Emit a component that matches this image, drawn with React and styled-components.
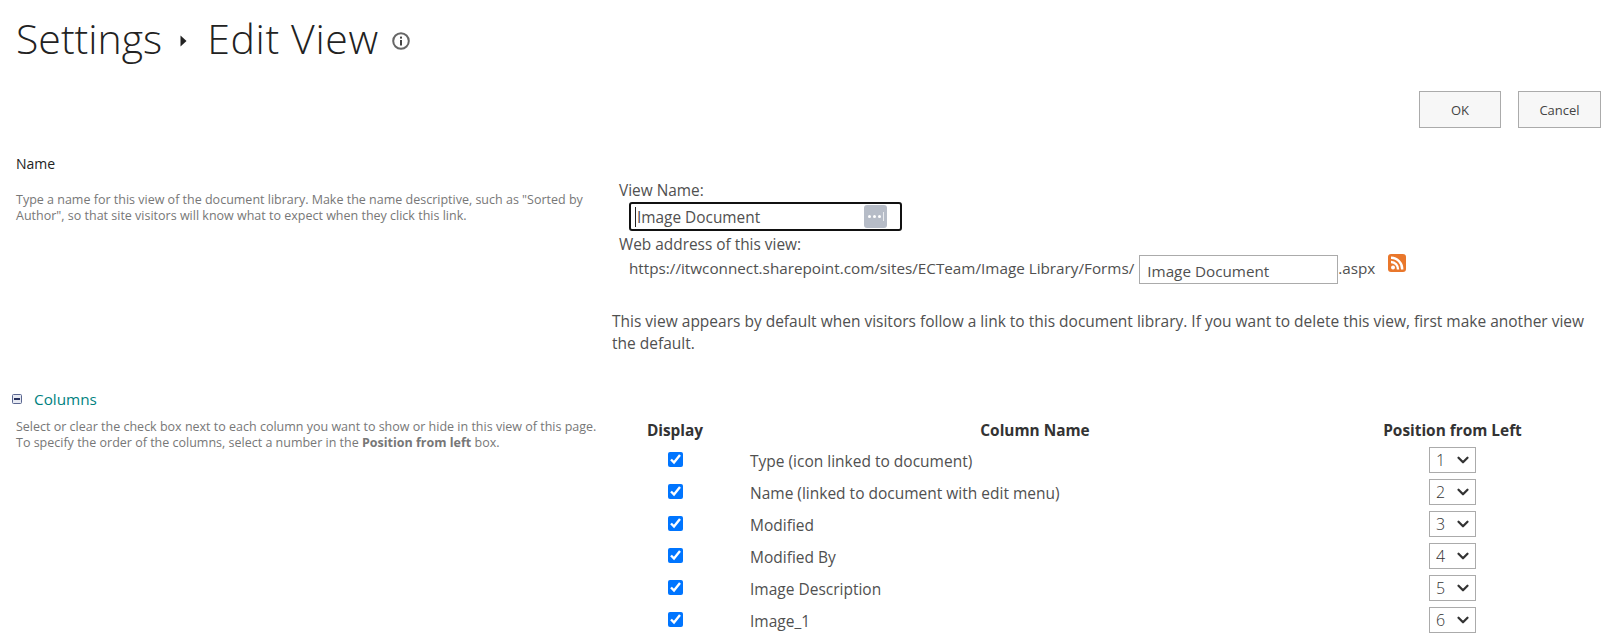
import React from 'react';
import styled, { createGlobalStyle } from 'styled-components';
import { ChevronDown } from 'lucide-react';

const GlobalStyle = createGlobalStyle`
    html, body {
        margin: 0;
        background: #fff;
        overflow: hidden;
    }
    body {
        font-family: "Open Sans", "Noto Sans", "Liberation Sans", sans-serif;
        color: #444;
    }
`;

const Page = styled.div`
    width: 1605px;
    height: 634px;
    overflow: hidden;
    padding: 13px 4px 0 16px;
    box-sizing: border-box;
`;

const TitleRow = styled.div`
    display: flex;
    align-items: center;
    height: 50px;
`;

const TitleText = styled.h1`
    margin: 0;
    font-size: 41px;
    font-weight: 300;
    line-height: 50px;
    letter-spacing: ${p => p.$spacing || 0}px;
    color: #222;
`;

const Crumb = styled.svg`
    width: 7px;
    height: 12px;
    margin: 5px 20px 0 18px;
`;

const InfoIcon = styled.svg`
    width: 18px;
    height: 18px;
    margin: 5px 0 0 13px;
`;

const ButtonRow = styled.div`
    display: flex;
    justify-content: flex-end;
    gap: 17px;
    margin-top: 28px;
`;

const Button = styled.button`
    width: ${p => p.$w}px;
    height: 37px;
    border: 1px solid #ababab;
    background: #f7f7f7;
    color: #444;
    font-family: inherit;
    font-size: 13px;
    padding: 0;
`;

const Section = styled.section`
    display: grid;
    grid-template-columns: 596px 1fr;
`;

const SectionTitle = styled.div`
    font-size: 14px;
    line-height: 18px;
    color: #222;
    margin-top: 27px;
`;

const Help = styled.p`
    margin: ${p => p.$top}px 0 0;
    font-size: 12.5px;
    line-height: 16px;
    color: #777;
    width: 590px;
`;

const NameForm = styled.div`
    padding: 52px 0 0;
    font-size: 15.4px;
    color: #505050;
`;

const Label = styled.div`
    line-height: 21px;
    margin-left: 7px;
`;

const NameInputWrap = styled.div`
    position: relative;
    width: 273px;
    height: 29px;
    margin: 1px 0 3px 17px;
`;

const NameInput = styled.input`
    width: 100%;
    height: 100%;
    box-sizing: border-box;
    border: 2px solid #111;
    border-radius: 3px;
    padding: 1px 0 0 6px;
    font: inherit;
    color: #505050;
    outline: none;
`;

const Caret = styled.span`
    position: absolute;
    left: 6px;
    top: 5px;
    width: 1px;
    height: 20px;
    background: #222;
`;

const DotsButton = styled.span`
    position: absolute;
    left: 235px;
    top: 3px;
    width: 23px;
    height: 23px;
    border-radius: 3px;
    background: #b6bcc7;
    display: flex;
    align-items: center;
    justify-content: center;
    gap: 2px;
`;

const Dot = styled.i`
    width: 3px;
    height: 3px;
    border-radius: 50%;
    background: #fff;
`;

const DotsBar = styled.i`
    width: 1px;
    height: 9px;
    background: #fff;
    opacity: 0.7;
`;

const AddressRow = styled.div`
    display: flex;
    margin: 0 0 0 17px;
    font-size: 15.25px;
    line-height: 21px;
`;

const AddressText = styled.span`
    margin-top: 3px;
    white-space: nowrap;
`;

const AddressInput = styled.input`
    width: 199px;
    height: 29px;
    box-sizing: border-box;
    border: 1px solid #ababab;
    padding: 2px 0 0 7px;
    margin-left: 5px;
    font: inherit;
    color: #505050;
`;

const Rss = styled.svg`
    width: 18px;
    height: 18px;
    margin: -1px 0 0 13px;
`;

const Note = styled.p`
    margin: 26px 0 0 0;
    width: 975px;
    font-size: 15.5px;
    line-height: 22px;
    color: #505050;
`;

const ColumnsHead = styled.div`
    display: flex;
    align-items: center;
    gap: 12px;
    height: 20px;
    margin-top: 35px;
    margin-left: -4px;
    font-size: 15.3px;
    color: #00827f;
`;

const Collapse = styled.svg`
    width: 10px;
    height: 10px;
`;

const ColumnsTable = styled.div`
    display: grid;
    grid-template-columns: 70px 650px 185px;
    grid-template-rows: 26px repeat(6, 32px);
    margin: 64px 0 0 28px;
    align-items: center;
`;

const HeadCell = styled.div`
    text-align: center;
    font-size: 15.4px;
    font-weight: 700;
    color: #333;
    line-height: 26px;
`;

const CheckCell = styled.div`
    display: flex;
    justify-content: center;
    position: relative;
    top: -1px;
`;

const Check = styled.input`
    width: 15px;
    height: 15px;
    margin: 0;
`;

const ColumnLabel = styled.div`
    padding: 2px 0 0 40px;
    font-size: 15.5px;
    color: #505050;
`;

const SelectCell = styled.div`
    display: flex;
    justify-content: center;
`;

const SelectWrap = styled.div`
    position: relative;
    width: 47px;
    height: 26px;

    svg {
        position: absolute;
        right: 4px;
        top: 4px;
        pointer-events: none;
    }
`;

const PosSelect = styled.select`
    appearance: none;
    width: 100%;
    height: 100%;
    border: 1px solid #ababab;
    border-radius: 0;
    background: #fff;
    font-family: inherit;
    font-size: 16px;
    font-weight: 300;
    color: #333;
    padding: 0 0 0 6px;
`;

const columns = [
    'Type (icon linked to document)',
    'Name (linked to document with edit menu)',
    'Modified',
    'Modified By',
    'Image Description',
    'Image_1',
];

function App() {
    return (
        <>
            <GlobalStyle />
            <Page>
                <TitleRow>
                    <TitleText>Settings</TitleText>
                    <Crumb viewBox="0 0 7 12"><path d="M0.5 0.5l6 5.5-6 5.5z" fill="#222" /></Crumb>
                    <TitleText $spacing={0.65}>Edit View</TitleText>
                    <InfoIcon viewBox="0 0 18 18">
                        <circle cx="9" cy="9" r="7.8" fill="none" stroke="#666" strokeWidth="2" />
                        <rect x="8" y="8" width="2" height="5.5" fill="#444" />
                        <rect x="8" y="4.6" width="2" height="2" fill="#444" />
                    </InfoIcon>
                </TitleRow>

                <ButtonRow>
                    <Button $w={82}>OK</Button>
                    <Button $w={83}>Cancel</Button>
                </ButtonRow>

                <Section>
                    <div>
                        <SectionTitle>Name</SectionTitle>
                        <Help $top={19}>
                            Type a name for this view of the document library. Make the name descriptive, such as "Sorted by
                            Author", so that site visitors will know what to expect when they click this link.
                        </Help>
                    </div>
                    <NameForm>
                        <Label>View Name:</Label>
                        <NameInputWrap>
                            <NameInput defaultValue="Image Document" />
                            <Caret />
                            <DotsButton><Dot /><Dot /><Dot /><DotsBar /></DotsButton>
                        </NameInputWrap>
                        <Label>Web address of this view:</Label>
                        <AddressRow>
                            <AddressText>https://itwconnect.sharepoint.com/sites/ECTeam/Image Library/Forms/</AddressText>
                            <AddressInput defaultValue="Image Document" />
                            <AddressText>.aspx</AddressText>
                            <Rss viewBox="0 0 18 18">
                                <rect width="18" height="18" rx="3" fill="#e9772b" />
                                <circle cx="5" cy="13.5" r="2" fill="#fff" />
                                <path d="M3 8a7 7 0 0 1 7 7.5M3 3.8a11.2 11.2 0 0 1 11.2 11.7" fill="none" stroke="#fff" strokeWidth="2.4" />
                            </Rss>
                        </AddressRow>
                        <Note>
                            This view appears by default when visitors follow a link to this document library. If you want to delete this view, first make another view the default.
                        </Note>
                    </NameForm>
                </Section>

                <Section>
                    <div>
                        <ColumnsHead>
                            <Collapse viewBox="0 0 10 10">
                                <rect x="0.5" y="0.5" width="9" height="9" rx="1" fill="#e6e9f2" stroke="#5a6690" />
                                <rect x="2" y="4" width="6" height="2" fill="#26305c" />
                            </Collapse>
                            Columns
                        </ColumnsHead>
                        <Help $top={10}>
                            Select or clear the check box next to each column you want to show or hide in this view of this page.
                            To specify the order of the columns, select a number in the <b>Position from left</b> box.
                        </Help>
                    </div>
                    <ColumnsTable>
                        <HeadCell>Display</HeadCell>
                        <HeadCell>Column Name</HeadCell>
                        <HeadCell>Position from Left</HeadCell>
                        {columns.map((name, i) => (
                            <React.Fragment key={name}>
                                <CheckCell><Check type="checkbox" defaultChecked /></CheckCell>
                                <ColumnLabel>{name}</ColumnLabel>
                                <SelectCell>
                                    <SelectWrap>
                                        <PosSelect defaultValue={i + 1}>
                                            {columns.map((_, n) => <option key={n} value={n + 1}>{n + 1}</option>)}
                                        </PosSelect>
                                        <ChevronDown size={18} strokeWidth={3} color="#333" />
                                    </SelectWrap>
                                </SelectCell>
                            </React.Fragment>
                        ))}
                    </ColumnsTable>
                </Section>
            </Page>
        </>
    );
}

export default App;
